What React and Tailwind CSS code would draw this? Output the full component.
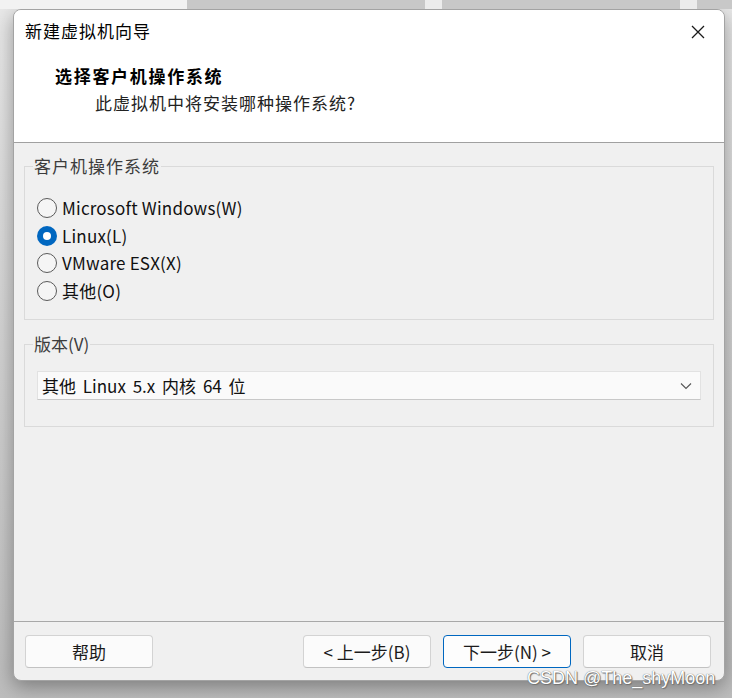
import React, { useState } from 'react';

const OPTIONS = [
    { id: 'win', label: 'Microsoft Windows(W)' },
    { id: 'linux', label: 'Linux(L)' },
    { id: 'esx', label: 'VMware ESX(X)' },
    { id: 'other', label: '其他(O)' },
];

function Radio({ checked }) {
    if (checked) {
        return (
            <span className="w-[20px] h-[20px] rounded-full bg-[#0067c0] flex items-center justify-center shrink-0">
                <span className="w-[8px] h-[8px] rounded-full bg-white" />
            </span>
        );
    }
    return <span className="w-[20px] h-[20px] rounded-full border border-[#5a5a5a] bg-[#f5f5f5] shrink-0" />;
}

function Button({ children, primary }) {
    return (
        <button
            className={`w-[128px] h-[33px] rounded-[4px] text-[17px] leading-none text-[#1b1b1b] ${primary
                ? 'border border-[#0067c0] bg-[#fdfdfd]'
                : 'border border-[#d3d3d3] border-b-[#c2c2c2] bg-[#fbfbfb]'
                }`}
        >
            {children}
        </button>
    );
}

export default function App() {
    const [os, setOs] = useState('linux');
    const font = { fontFamily: '"Noto Sans CJK SC", "Noto Sans", sans-serif' };

    return (
        <div className="relative w-[732px] h-[698px] overflow-hidden bg-gradient-to-b from-[#e9e9e9] to-[#bdbdbd]" style={font}>
            {/* desktop strip behind the dialog */}
            <div className="flex h-[9px]">
                <div className="w-[187px] bg-[#f2f2f2]" />
                <div className="w-[238px] bg-[#c8c8c8]" />
                <div className="w-[17px] bg-[#ececec]" />
                <div className="w-[238px] bg-[#c8c8c8]" />
                <div className="w-[17px] bg-[#ececec]" />
                <div className="flex-1 bg-[#c8c8c8]" />
            </div>

            <div className="ml-[13px] w-[712px] h-[672px] rounded-[8px] border border-[#a3a3a3] bg-[#f0f0f0] overflow-hidden flex flex-col shadow-[0_6px_20px_rgba(0,0,0,0.35)]">
                {/* header */}
                <div className="bg-white h-[133px] border-b border-[#a0a0a0] shrink-0">
                    <div className="flex items-center justify-between pl-[11px] pr-[19px] pt-[9px]">
                        <span className="text-[17px] leading-[24px] tracking-[1px] text-black">新建虚拟机向导</span>
                        <svg width="14" height="14" viewBox="0 0 14 14" className="mt-[1px]">
                            <path d="M1 1L13 13M13 1L1 13" stroke="#1a1a1a" strokeWidth="1.3" />
                        </svg>
                    </div>
                    <div className="pl-[41px] mt-[21px] text-[17px] leading-[24px] tracking-[1.7px] font-bold text-black">选择客户机操作系统</div>
                    <div className="pl-[81px] mt-[3px] text-[17px] leading-[24px] tracking-[1px] text-[#222]">此虚拟机中将安装哪种操作系统?</div>
                </div>

                {/* body */}
                <div className="flex-1 px-[10px]">
                    <div className="mt-[23px] h-[154px] border border-[#dadada]">
                        <div className="-mt-[13px] ml-[8px] w-fit bg-[#f0f0f0] px-px text-[17px] leading-[24px] tracking-[1px] text-[#3c3c3c]">客户机操作系统</div>
                        <div className="mt-[16px] pl-[12px] flex flex-col">
                            {OPTIONS.map((o) => (
                                <label key={o.id} className="h-[27.7px] flex items-center gap-[5px] cursor-default" onClick={() => setOs(o.id)}>
                                    <Radio checked={os === o.id} />
                                    <span className="text-[17px] leading-[24px] tracking-[0.2px] text-[#111]">{o.label}</span>
                                </label>
                            ))}
                        </div>
                    </div>

                    <div className="mt-[24px] h-[83px] border border-[#dadada]">
                        <div className="-mt-[13px] ml-[8px] w-fit bg-[#f0f0f0] px-px text-[17px] leading-[24px] text-[#3c3c3c]">版本(V)</div>
                        <div className="mt-[15px] mx-[12px] h-[29px] bg-[#fafafa] border border-[#e2e2e2] border-b-[#c8c8c8] flex items-center justify-between pl-[4px] pr-[8px]">
                            <span className="text-[17px] leading-[24px] [word-spacing:3px] text-[#111]">其他 Linux 5.x 内核 64 位</span>
                            <svg width="12" height="8" viewBox="0 0 12 8">
                                <path d="M1 1.5L6 6.5L11 1.5" fill="none" stroke="#555" strokeWidth="1.1" />
                            </svg>
                        </div>
                    </div>
                </div>

                {/* footer */}
                <div className="h-[59px] border-t border-[#a8a8a8] shrink-0 pt-[13px] pl-[11px] pr-[13px] flex items-start">
                    <Button>帮助</Button>
                    <div className="ml-auto flex gap-[12px]">
                        <Button>&lt; 上一步(B)</Button>
                        <Button primary>下一步(N) &gt;</Button>
                        <Button>取消</Button>
                    </div>
                </div>
            </div>

            {/* watermark */}
            <div
                className="absolute left-[527px] top-[667px] whitespace-nowrap text-[18px] leading-[22px] text-white [text-shadow:0_0_1px_#444,1px_1px_1px_#777]"
                style={{ fontFamily: '"Liberation Sans", Arial, sans-serif' }}
            >
                CSDN @The_shyMoon
            </div>
        </div>
    );
}
